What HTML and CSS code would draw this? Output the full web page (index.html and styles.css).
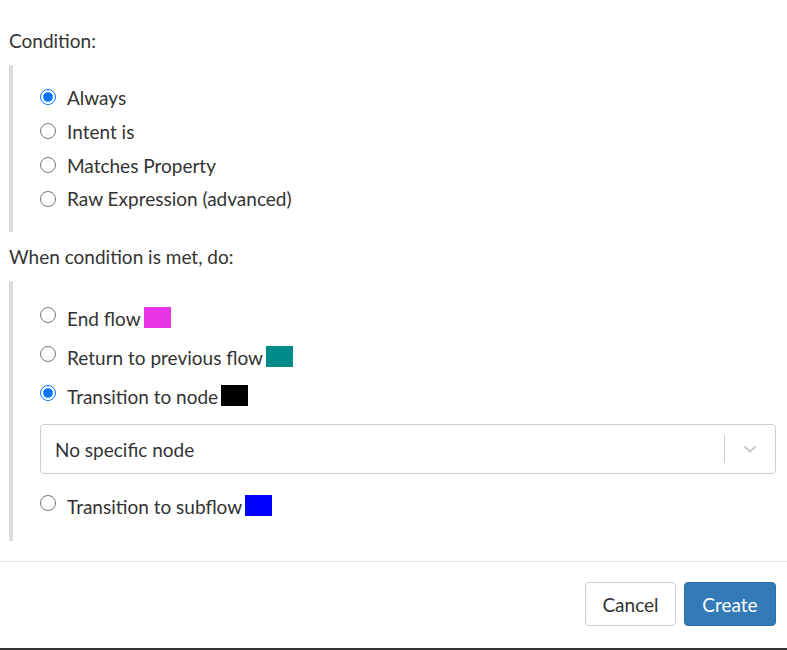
FILE: index.html
```html
<!DOCTYPE html>
<html>
<head>
<meta charset="utf-8">
<link rel="stylesheet" href="styles.css">
</head>
<body>
<div class="dialog">
  <div class="body">
    <div class="section-title">Condition:</div>
    <div class="group group-cond">
      <label class="opt"><input type="radio" name="cond" checked><span>Always</span></label>
      <label class="opt"><input type="radio" name="cond"><span>Intent is</span></label>
      <label class="opt"><input type="radio" name="cond"><span>Matches Property</span></label>
      <label class="opt"><input type="radio" name="cond"><span>Raw Expression (advanced)</span></label>
    </div>
    <div class="section-title second">When condition is met, do:</div>
    <div class="group group-do">
      <label class="act"><input type="radio" name="act"><span class="lbl">End flow<i class="swatch sw-end"></i></span></label>
      <label class="act"><input type="radio" name="act"><span class="lbl">Return to previous flow<i class="swatch sw-ret"></i></span></label>
      <label class="act"><input type="radio" name="act" checked><span class="lbl">Transition to node<i class="swatch sw-node"></i></span></label>
      <div class="select">
        <span class="select-value">No specific node</span>
        <span class="select-sep"></span>
        <span class="select-arrow">
          <svg width="14" height="8" viewBox="0 0 14 8"><path d="M1.5 1.5 L7 6.5 L12.5 1.5" fill="none" stroke="#cccccc" stroke-width="2.2"/></svg>
        </span>
      </div>
      <label class="act last"><input type="radio" name="act"><span class="lbl">Transition to subflow<i class="swatch sw-sub"></i></span></label>
    </div>
  </div>
  <div class="footer">
    <button class="btn btn-cancel">Cancel</button>
    <button class="btn btn-create">Create</button>
  </div>
  <div class="bottom-edge"></div>
</div>
</body>
</html>
```
FILE: styles.css
```css
* { box-sizing: border-box; }
html, body { margin: 0; padding: 0; background: #fff; }
body {
  font-family: Lato, "Liberation Sans", sans-serif;
  font-size: 19px;
  color: #333;
  width: 787px;
  height: 650px;
  overflow: hidden;
}
.dialog { display: flex; flex-direction: column; height: 650px; }
.body { padding: 30px 11px 0 9px; height: 561px; }
.section-title { line-height: 22px; height: 22px; }
.section-title.second { margin-top: 14px; }
.group {
  border-left: 4px solid #dddddd;
  margin-top: 13px;
  padding-left: 27px;
}
.group-cond { padding-top: 15px; padding-bottom: 17px; }
.opt {
  display: flex;
  align-items: center;
  height: 34px;
}
.opt:nth-child(4) { height: 33px; }
input[type=radio] {
  width: 16px;
  height: 16px;
  margin: 0 11px 0 0;
  flex: none;
}
.group-do { padding-top: 26px; padding-bottom: 15px; }
.act {
  display: flex;
  align-items: flex-start;
  height: 39px;
}
.act input[type=radio] { margin-top: 0; margin-right: 11px; }
.lbl { line-height: 21px; display: block; margin-top: 0; }
.swatch {
  display: inline-block;
  width: 27px;
  height: 21px;
  vertical-align: -2px;
  margin-left: 3px;
}
.sw-end { background: #e535e5; }
.sw-ret { background: #008b8b; }
.sw-node { background: #000; }
.sw-sub { background: #0000ff; }
.select {
  height: 50px;
  border: 1px solid #cccccc;
  border-radius: 4px;
  display: flex;
  align-items: center;
  padding-left: 14px;
  margin-bottom: 21px;
}
.select-value { flex: 1; }
.select-sep { width: 1px; height: 28px; background: #cccccc; }
.select-arrow { width: 50px; display: flex; justify-content: center; align-items: center; }
.select-arrow svg { display: block; }
.act.last { height: 31px; }
.footer {
  border-top: 1px solid #e5e5e5;
  display: flex;
  justify-content: flex-end;
  gap: 8px;
  padding: 20px 11px 0 0;
  flex: 1;
}
.btn {
  font-family: Lato, "Liberation Sans", sans-serif;
  font-size: 19px;
  height: 44px;
  border-radius: 4px;
  padding: 0;
  cursor: pointer;
}
.btn-cancel { background: #fff; border: 1px solid #cccccc; color: #333; width: 91px; }
.btn-create { background: #337ab7; border: 1px solid #2e6da4; color: #fff; width: 92px; }
.bottom-edge { height: 2px; background: #333; }
```
